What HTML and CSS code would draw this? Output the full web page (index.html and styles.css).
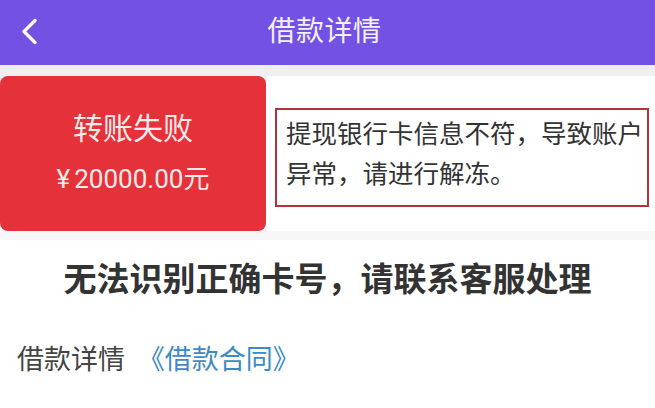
FILE: index.html
```html
<!DOCTYPE html>
<html lang="zh-CN">
<head>
    <meta charset="UTF-8">
    <meta name="viewport" content="width=device-width, initial-scale=1.0">
    <title>借款详情</title>
    <link rel="stylesheet" href="styles.css">
</head>
<body>
    <div class="header">
        <a class="back" href="#">
            <svg width="16" height="28" viewBox="0 0 16 28">
                <polyline points="14,2.5 3,13.5 14,24.5" fill="none" stroke="#ffffff" stroke-width="3.2" stroke-linecap="round" stroke-linejoin="round"/>
            </svg>
        </a>
        <h1>借款详情</h1>
        <span></span>
    </div>

    <div class="status-band">
        <div class="status-row">
            <div class="status-card">
                <div class="status-title">转账失败</div>
                <div class="status-amount"><span class="yen">¥</span>20000.00元</div>
            </div>
            <div class="status-panel">
                <div class="notice-box">提现银行卡信息不符，导致账户异常，请进行解冻。</div>
            </div>
        </div>
    </div>

    <h2 class="headline">无法识别正确卡号，请联系客服处理</h2>

    <div class="detail-line">
        <span>借款详情</span>
        <a class="contract" href="#">《借款合同》</a>
    </div>
</body>
</html>
```

FILE: styles.css
```css
body {
    font-family: Roboto, "Noto Sans CJK SC", sans-serif;
    background-color: #ffffff;
    margin: 0;
    padding: 0;
    color: #333333;
}
.header {
    height: 65px;
    background-color: #7352e3;
    display: grid;
    grid-template-columns: 60px 1fr 60px;
    align-items: center;
    box-sizing: border-box;
    padding-bottom: 7px;
}
.back {
    display: block;
    padding-left: 21px;
    padding-top: 5px;
    line-height: 0;
}
.header h1 {
    margin: 0;
    text-align: center;
    font-size: 28px;
    font-weight: normal;
    color: #f3f0fc;
    letter-spacing: 0.5px;
    padding-right: 6px;
}
.status-band {
    background: linear-gradient(#efeff3, #f7f7f9);
    padding: 11px 0 9px;
}
.status-row {
    display: flex;
    height: 155px;
}
.status-card {
    width: 266px;
    background-color: #e5323a;
    border-radius: 8px;
    color: #fbeaea;
    text-align: center;
    display: flex;
    flex-direction: column;
    justify-content: center;
}
.status-title {
    font-size: 30px;
    line-height: 44px;
}
.status-amount {
    font-size: 26px;
    line-height: 44px;
    margin-top: 6px;
}
.yen {
    margin-right: 4px;
}
.status-panel {
    flex: 1;
    background-color: #ffffff;
    padding: 32px 6px 0 9px;
}
.notice-box {
    border: 2px solid #b3313a;
    font-size: 25.5px;
    line-height: 40px;
    padding: 4px 4px 11px 9px;
    color: #333333;
}
.headline {
    margin: 16px 0 0;
    text-align: center;
    font-size: 33px;
    line-height: 48px;
    font-weight: bold;
    color: #333333;
}
.detail-line {
    margin-top: 36px;
    padding-left: 17px;
    font-size: 27px;
    line-height: 40px;
    color: #444444;
}
.contract {
    color: #3b8bc6;
    text-decoration: none;
    margin-left: 6px;
}
```
